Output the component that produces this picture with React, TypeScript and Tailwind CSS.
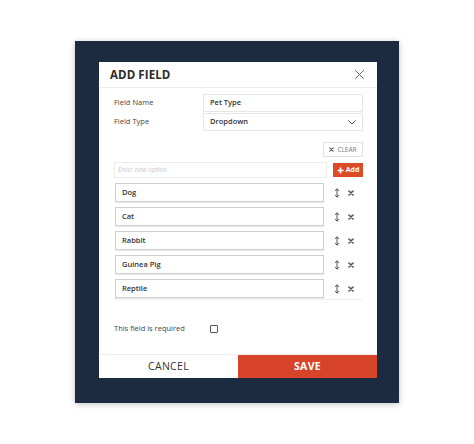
import React from 'react';

const options = ['Dog', 'Cat', 'Rabbit', 'Guinea Pig', 'Reptile'];

function MoveIcon() {
  return (
    <svg width="6" height="10" viewBox="0 0 6 10" fill="none" stroke="#555" strokeWidth="1" strokeLinecap="round" strokeLinejoin="round">
      <path d="M3 1v8" />
      <path d="M1.2 2.6L3 1l1.8 1.6" />
      <path d="M1.2 7.4L3 9l1.8-1.6" />
    </svg>
  );
}

function SmallX({ color = '#555', size = 6, width = 1.6 }: { color?: string; size?: number; width?: number }) {
  return (
    <svg width={size} height={size} viewBox="0 0 6 6" fill="none" stroke={color} strokeWidth={width} strokeLinecap="round">
      <path d="M1 1l4 4M5 1L1 5" />
    </svg>
  );
}

export default function App() {
  return (
    <div
      className="min-h-screen flex items-center justify-center bg-white"
      style={{ fontFamily: '"Open Sans", "Noto Sans", sans-serif' }}
    >
      <div className="w-[324px] h-[362px] bg-[#1c2b40] pt-[21px] pl-[24px] pr-[22px] pb-[25px] shadow-[0_1px_6px_rgba(0,0,0,0.25)]">
        <div className="h-full bg-white flex flex-col">
          {/* Header */}
          <div className="h-[26px] flex items-center justify-between pl-[11px] pr-[13px] border-b border-[#ececec]">
            <span className="text-[11.5px] font-bold text-[#2b2b2b] tracking-[0.1px]">ADD FIELD</span>
            <svg width="9" height="9" viewBox="0 0 9 9" stroke="#666" strokeWidth="1" strokeLinecap="round">
              <path d="M0.5 0.5l8 8M8.5 0.5l-8 8" />
            </svg>
          </div>

          {/* Body */}
          <div className="flex-1 flex flex-col pl-[15px] pr-[14px] pt-[6px]">
            <div className="flex items-center h-[18px]">
              <span className="w-[89px] text-[7.5px] text-[#444]">Field Name</span>
              <div className="flex-1 h-full border border-[#e6e6e6] flex items-center px-[6px] text-[7.5px] font-semibold text-[#333]">
                Pet Type
              </div>
            </div>
            <div className="flex items-center h-[18px] mt-px">
              <span className="w-[89px] text-[7.5px] text-[#444]">Field Type</span>
              <div className="flex-1 h-full border border-[#e6e6e6] flex items-center justify-between px-[6px] text-[7.5px] font-semibold text-[#333]">
                Dropdown
                <svg width="8" height="5" viewBox="0 0 8 5" fill="none" stroke="#555" strokeWidth="1" strokeLinecap="round" strokeLinejoin="round">
                  <path d="M0.7 0.7L4 4l3.3-3.3" />
                </svg>
              </div>
            </div>

            <div className="flex justify-end mt-[11px]">
              <div className="w-[40px] h-[15px] border border-[#e2e2e2] flex items-center justify-center gap-[3px] text-[6.5px] text-[#777]">
                <SmallX color="#666" size={5} width={1.5} />
                CLEAR
              </div>
            </div>

            <div className="flex items-center mt-[5px] h-[16px]">
              <div className="w-[213px] h-full border border-[#ececec] flex items-center px-[3px] text-[6.5px] italic text-[#c8c8c8]">
                Enter new option
              </div>
              <div className="ml-[6px] w-[30px] h-[14px] bg-[#dd4a26] flex items-center justify-center gap-[2px] text-white text-[7px] font-bold">
                <svg width="7" height="7" viewBox="0 0 7 7" stroke="#fff" strokeWidth="1.6">
                  <path d="M3.5 0.5v6M0.5 3.5h6" />
                </svg>
                Add
              </div>
            </div>

            <div className="flex flex-col gap-[5px] mt-[5px]">
              {options.map((o) => (
                <div key={o} className="flex items-center h-[19px] pl-px">
                  <div className="w-[209px] h-full border border-[#cfcfcf] shadow-[0_1px_1px_rgba(0,0,0,0.08)] flex items-center px-[6px] text-[7.5px] font-semibold text-[#333]">
                    {o}
                  </div>
                  <div className="ml-[10px] flex items-center">
                    <MoveIcon />
                  </div>
                  <div className="ml-[8px] flex items-center">
                    <SmallX />
                  </div>
                </div>
              ))}
            </div>
            <div className="h-px mt-px bg-[#f0f0f0]" />

            <div className="flex items-center h-[8px] mt-[25px]">
              <span className="w-[96px] text-[7.5px] text-[#444]">This field is required</span>
              <div className="w-[8px] h-[8px] border border-[#555] rounded-[1px]" />
            </div>
          </div>

          {/* Footer */}
          <div className="h-[24px] flex border-t border-[#f0f0f0]">
            <button className="flex-1 flex items-center justify-center text-[10.5px] text-[#333] tracking-[0.3px]">
              CANCEL
            </button>
            <button className="flex-1 flex items-center justify-center bg-[#d8442a] text-white text-[10.5px] font-bold tracking-[0.3px]">
              SAVE
            </button>
          </div>
        </div>
      </div>
    </div>
  );
}
